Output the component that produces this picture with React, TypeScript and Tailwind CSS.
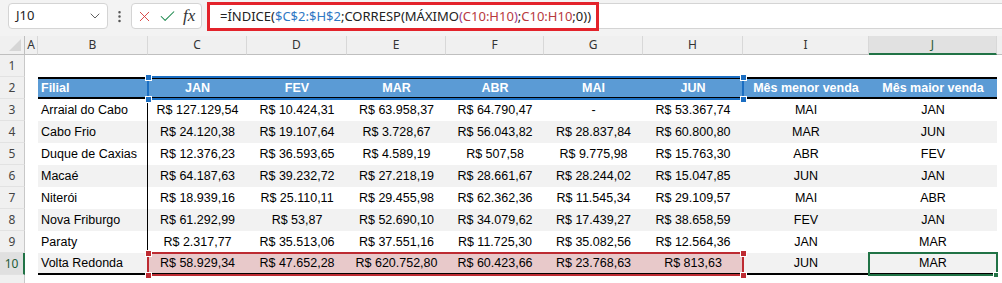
import { Check, ChevronDown, EllipsisVertical, X } from "lucide-react";

const GRID =
  "relative grid grid-cols-[25px_13px_110px_99px_100px_99px_98px_99px_100px_126px_128px_1fr] grid-rows-[19px_repeat(11,22px)]";

const colLetters = ["A", "B", "C", "D", "E", "F", "G", "H", "I", "J"];
const months = ["JAN", "FEV", "MAR", "ABR", "MAI", "JUN"];

type Row = { filial: string; values: string[]; menor: string; maior: string };

const data: Row[] = [
  { filial: "Arraial do Cabo", values: ["127.129,54", "10.424,31", "63.958,37", "64.790,47", "", "53.367,74"], menor: "MAI", maior: "JAN" },
  { filial: "Cabo Frio", values: ["24.120,38", "19.107,64", "3.728,67", "56.043,82", "28.837,84", "60.800,80"], menor: "MAR", maior: "JUN" },
  { filial: "Duque de Caxias", values: ["12.376,23", "36.593,65", "4.589,19", "507,58", "9.775,98", "15.763,30"], menor: "ABR", maior: "FEV" },
  { filial: "Macaé", values: ["64.187,63", "39.232,72", "27.218,19", "28.661,67", "28.244,02", "15.047,85"], menor: "JUN", maior: "JAN" },
  { filial: "Niterói", values: ["18.939,16", "25.110,11", "29.455,98", "62.362,36", "11.545,34", "29.109,57"], menor: "MAI", maior: "ABR" },
  { filial: "Nova Friburgo", values: ["61.292,99", "53,87", "52.690,10", "34.079,62", "17.439,27", "38.658,59"], menor: "FEV", maior: "JAN" },
  { filial: "Paraty", values: ["2.317,77", "35.513,06", "37.551,16", "11.725,30", "35.082,56", "12.564,36"], menor: "JAN", maior: "MAR" },
  { filial: "Volta Redonda", values: ["58.929,34", "47.652,28", "620.752,80", "60.423,66", "23.768,63", "813,63"], menor: "JUN", maior: "MAR" },
];

const cellFont = "font-['Liberation_Sans',Arial,sans-serif] text-[12.5px] text-black";
const uiFont = "font-['Noto_Sans','Open_Sans',sans-serif]";

function RowHeader({ n, active }: { n?: number; active?: boolean }) {
  return (
    <div
      className={`flex items-center justify-center border-b border-[#e2e2e2] ${uiFont} text-[12px] ${
        active
          ? "border-r-2 border-r-[#217346] bg-[#e0e0e0] text-[#1e5c38]"
          : "border-r border-r-[#c8c8c8] bg-[#f0f0f0] text-[#444]"
      }`}
    >
      {n}
    </div>
  );
}

function Handle({ x, y, color }: { x: number; y: number; color: string }) {
  return (
    <div
      className="absolute h-[7px] w-[7px] border border-white"
      style={{ left: x - 3.5, top: y - 3.5, backgroundColor: color }}
    />
  );
}

export default function App() {
  return (
    <div className="h-[283px] w-[1002px] overflow-hidden bg-white">
      {/* barra de fórmulas */}
      <div className={`flex h-[36px] items-start bg-[#f3f3f3] pt-[3px] ${uiFont}`}>
        <div className="ml-[8px] flex h-[26px] w-[100px] items-center justify-between rounded-[4px] border border-[#d4d4d4] bg-white pl-[7px] pr-[4px] text-[13px] text-[#222]">
          <span>J10</span>
          <ChevronDown size={16} strokeWidth={1.4} color="#555" />
        </div>
        <div className="flex h-[26px] w-[23px] items-center justify-center">
          <EllipsisVertical size={15} strokeWidth={2} color="#555" />
        </div>
        <div className="flex h-[26px] w-[71px] items-center rounded-[4px] border border-[#d4d4d4] bg-white pl-[4px]">
          <X size={17} strokeWidth={1.3} color="#d83b3b" />
          <Check size={19} strokeWidth={1.3} color="#17864a" className="ml-[5px]" />
          <span className="ml-[6px] font-['Liberation_Serif',serif] text-[17px] italic text-[#333]">fx</span>
        </div>
        <div className="ml-[5px] h-[26px] flex-1 border-y border-[#d4d4d4] bg-white">
          <div className="-mt-[2px] flex h-[29px] w-[392px] items-center border-[3px] border-[#e3232b] pl-[10px] text-[13px] text-[#222]">
            <span>=ÍNDICE(</span>
            <span className="text-[#2f78c4]">$C$2:$H$2</span>
            <span>;CORRESP(MÁXIMO</span>
            <span className="text-[#9c3c8c]">(</span>
            <span className="text-[#b8393d]">C10:H10</span>
            <span className="text-[#9c3c8c]">)</span>
            <span>;</span>
            <span className="text-[#b8393d]">C10:H10</span>
            <span>;0))</span>
          </div>
        </div>
      </div>

      {/* planilha */}
      <div className={GRID}>
        {/* cabeçalho de colunas */}
        <div className="flex items-end justify-end border-b border-r border-[#bfbfbf] bg-[#f0f0f0] pb-[3px] pr-[3px]">
          <svg width="12" height="12" viewBox="0 0 12 12">
            <polygon points="12,0 12,12 0,12" fill="#d6d6d6" />
          </svg>
        </div>
        {colLetters.map((l) => (
          <div
            key={l}
            className={`flex items-center justify-center border-r border-r-[#d8d8d8] ${uiFont} text-[12px] ${
              l === "J"
                ? "border-b-2 border-b-[#217346] bg-[#e1e1e1] text-[#1e5c38]"
                : "border-b border-b-[#bfbfbf] bg-[#f0f0f0] text-[#333]"
            }`}
          >
            {l}
          </div>
        ))}
        <div className="border-b border-[#bfbfbf] bg-[#f0f0f0]" />

        {/* linha 1 */}
        <RowHeader n={1} />
        <div className="col-span-11" />

        {/* linha 2 - cabeçalho da tabela */}
        <RowHeader n={2} />
        <div />
        <div className={`flex items-center border-y-2 border-black bg-[#5b9bd5] pl-[3px] font-bold ${cellFont} !text-white`}>
          Filial
        </div>
        {months.map((m) => (
          <div key={m} className={`flex items-center justify-center border-y-2 border-black bg-[#5b9bd5] font-bold ${cellFont} !text-white`}>
            {m}
          </div>
        ))}
        <div className={`flex items-center justify-center border-y-2 border-black bg-[#5b9bd5] font-bold ${cellFont} !text-white`}>
          Mês menor venda
        </div>
        <div className={`flex items-center justify-center border-y-2 border-black bg-[#5b9bd5] font-bold ${cellFont} !text-white`}>
          Mês maior venda
        </div>
        <div />

        {/* linhas de dados */}
        {data.map((r, i) => {
          const n = i + 3;
          const shaded = n % 2 === 0;
          const last = n === 10;
          const bg = shaded ? "bg-[#f2f2f2]" : "bg-white";
          const bottom = last ? "border-b-2 border-b-black" : "";
          return [
            <RowHeader key={`h${n}`} n={n} active={last} />,
            <div key={`a${n}`} />,
            <div key={`b${n}`} className={`flex items-center border-r border-r-black pl-[3px] ${bg} ${bottom} ${cellFont}`}>
              {r.filial}
            </div>,
            ...r.values.map((v, j) => (
              <div
                key={`v${n}${j}`}
                className={`flex items-center justify-center ${last ? "bg-[#e8c9ca]" : bg} ${bottom} ${cellFont}`}
              >
                {v === "" ? "-" : `R$ ${v}`}
              </div>
            )),
            <div key={`m${n}`} className={`flex items-center justify-center ${bg} ${bottom} ${cellFont}`}>
              {r.menor}
            </div>,
            <div key={`x${n}`} className={`flex items-center justify-center ${bg} ${bottom} ${cellFont}`}>
              {r.maior}
            </div>,
            <div key={`f${n}`} />,
          ];
        })}

        {/* linha 11 (cortada pela janela) */}
        <RowHeader />
        <div className="col-span-11" />

        {/* seleções sobrepostas */}
        <div className="pointer-events-none absolute left-[147px] top-[40px] h-[24px] w-[597px] border-2 border-[#1b6ec2]" />
        <Handle x={148} y={41} color="#1b6ec2" />
        <Handle x={148} y={63} color="#1b6ec2" />
        <Handle x={743} y={41} color="#1b6ec2" />
        <Handle x={743} y={63} color="#1b6ec2" />

        <div className="pointer-events-none absolute left-[147px] top-[216px] h-[24px] w-[597px] border-2 border-[#bd2b32]" />
        <Handle x={148} y={217} color="#bd2b32" />
        <Handle x={148} y={239} color="#bd2b32" />
        <Handle x={743} y={217} color="#bd2b32" />
        <Handle x={743} y={239} color="#bd2b32" />

        <div className="pointer-events-none absolute left-[868px] top-[216px] h-[24px] w-[130px] border-2 border-[#217346]" />
        <div className="absolute left-[993px] top-[236px] h-[6px] w-[6px] border border-white bg-[#217346]" />
      </div>
    </div>
  );
}
